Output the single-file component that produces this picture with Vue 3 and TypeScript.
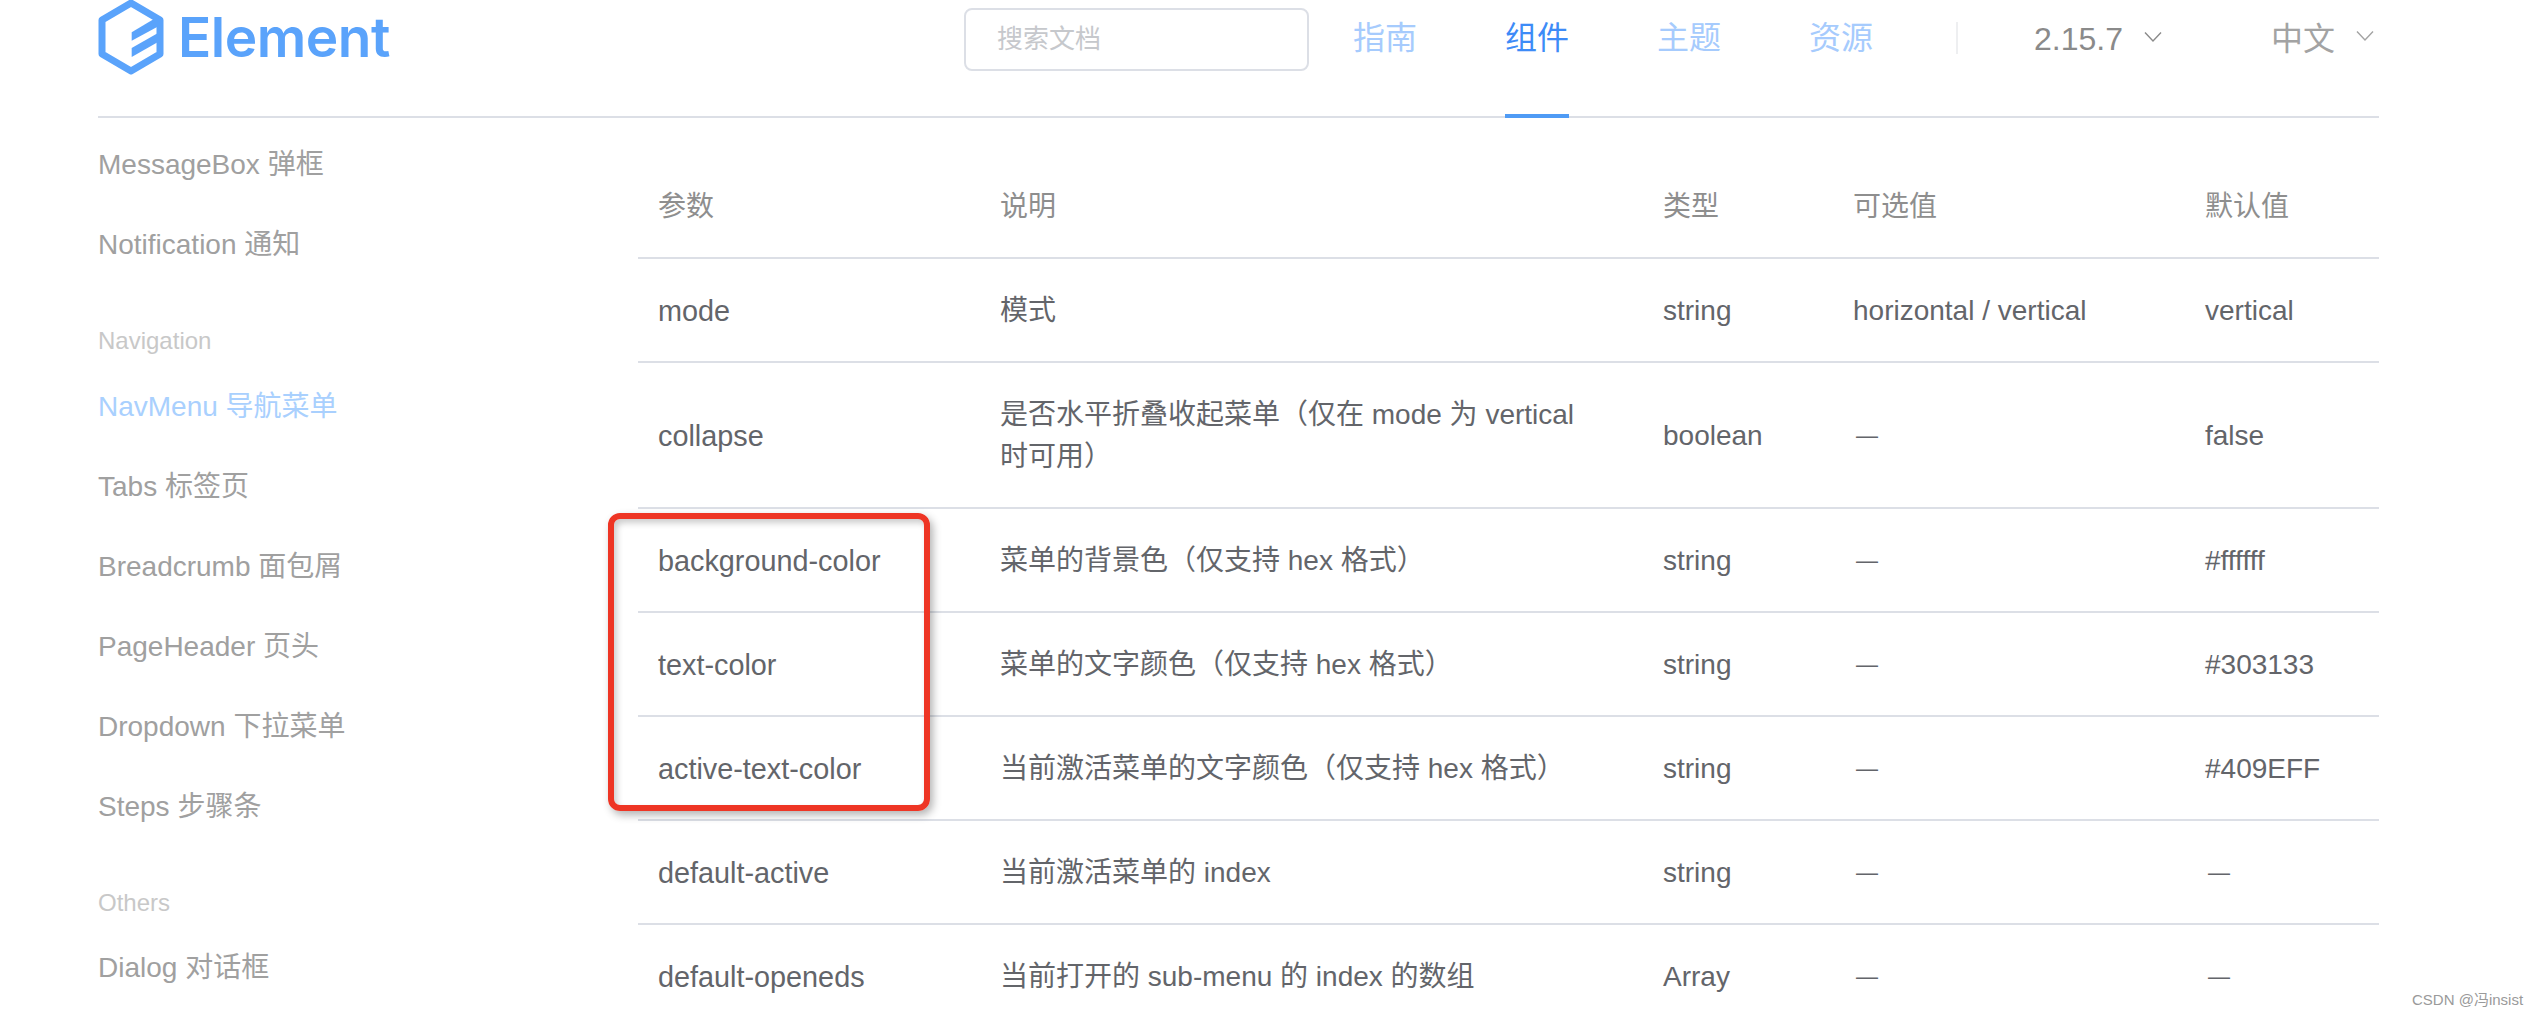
<script setup lang="ts">
interface Row { name: string; desc: string; type: string; options: string; def: string; }
interface Side { label: string; group?: boolean; active?: boolean; }

const links: { label: string; active?: boolean }[] = [
  { label: '指南' }, { label: '组件', active: true }, { label: '主题' }, { label: '资源' },
];
const side: Side[] = [
  { label: 'MessageBox 弹框' },
  { label: 'Notification 通知' },
  { label: 'Navigation', group: true },
  { label: 'NavMenu 导航菜单', active: true },
  { label: 'Tabs 标签页' },
  { label: 'Breadcrumb 面包屑' },
  { label: 'PageHeader 页头' },
  { label: 'Dropdown 下拉菜单' },
  { label: 'Steps 步骤条' },
  { label: 'Others', group: true },
  { label: 'Dialog 对话框' },
];
const heads = ['参数', '说明', '类型', '可选值', '默认值'];
const rows: Row[] = [
  { name: 'mode', desc: '模式', type: 'string', options: 'horizontal / vertical', def: 'vertical' },
  { name: 'collapse', desc: '是否水平折叠收起菜单（仅在 mode 为 vertical 时可用）', type: 'boolean', options: '—', def: 'false' },
  { name: 'background-color', desc: '菜单的背景色（仅支持 hex 格式）', type: 'string', options: '—', def: '#ffffff' },
  { name: 'text-color', desc: '菜单的文字颜色（仅支持 hex 格式）', type: 'string', options: '—', def: '#303133' },
  { name: 'active-text-color', desc: '当前激活菜单的文字颜色（仅支持 hex 格式）', type: 'string', options: '—', def: '#409EFF' },
  { name: 'default-active', desc: '当前激活菜单的 index', type: 'string', options: '—', def: '—' },
  { name: 'default-openeds', desc: '当前打开的 sub-menu 的 index 的数组', type: 'Array', options: '—', def: '—' },
];
</script>

<template>
  <div class="page">
    <header class="header">
      <div class="logo">
        <svg class="mark" viewBox="0 0 68 76" width="68" height="76" aria-hidden="true">
          <path d="M34 4 L63 21 V55 L34 72 L5 55 V21 Z" fill="none" stroke="#5aa3fb" stroke-width="7" stroke-linejoin="round" />
          <path d="M34.7 33.3 L56.5 20.3 L61 23 V27.6 L34.7 41.7 Z" fill="#5aa3fb" />
          <path d="M34.7 49 L61 34 V43 L34.7 58 Z" fill="#5aa3fb" />
        </svg>
        <span class="word">Element</span>
      </div>
      <div class="search">搜索文档</div>
      <nav class="links">
        <a v-for="l in links" :key="l.label" class="link" :class="{ on: l.active }">{{ l.label }}</a>
      </nav>
      <span class="divider"></span>
      <div class="drop ver">
        <span>2.15.7</span>
        <svg class="chev" viewBox="0 0 18 12" width="18" height="12"><path d="M1 1.5 L9 10 L17 1.5" fill="none" stroke="currentColor" stroke-width="1.4" /></svg>
      </div>
      <div class="drop lang">
        <span>中文</span>
        <svg class="chev" viewBox="0 0 18 12" width="18" height="12"><path d="M1 1.5 L9 10 L17 1.5" fill="none" stroke="currentColor" stroke-width="1.4" /></svg>
      </div>
    </header>

    <div class="body">
      <aside class="side">
        <div
          v-for="s in side"
          :key="s.label"
          :class="s.group ? 'group' : 'item'"
          :data-active="s.active ? 'y' : null"
        >{{ s.label }}</div>
      </aside>
      <main class="main">
        <table class="tbl">
          <colgroup>
            <col class="c1" /><col class="c2" /><col class="c3" /><col class="c4" /><col class="c5" />
          </colgroup>
          <thead>
            <tr><th v-for="h in heads" :key="h">{{ h }}</th></tr>
          </thead>
          <tbody>
            <tr v-for="r in rows" :key="r.name">
              <td class="name">{{ r.name }}</td>
              <td class="desc">{{ r.desc }}</td>
              <td>{{ r.type }}</td>
              <td :class="{ dash: r.options === '—' }">{{ r.options }}</td>
              <td :class="{ dash: r.def === '—' }">{{ r.def }}</td>
            </tr>
          </tbody>
        </table>
      </main>
    </div>

    <div class="redbox"></div>
    <div class="mark-text">CSDN @冯insist</div>
  </div>
</template>

<style scoped>
.page {
  position: relative;
  width: 2534px;
  height: 1016px;
  overflow: hidden;
  background: #fff;
  font-family: "Liberation Sans", "Noto Sans CJK SC", sans-serif;
  box-sizing: border-box;
  padding: 0 155px 0 98px;
}
.header {
  height: 118px;
  box-sizing: border-box;
  border-bottom: 2px solid #dcdfe6;
  display: flex;
  align-items: flex-start;
  white-space: nowrap;
}
.logo {
  display: flex;
  align-items: center;
  flex: none;
  width: 866px;
  height: 76px;
  margin-top: -1px;
}
.mark { margin-left: -1px; flex: none; }
.word {
  margin-left: 13px;
  font-family: Inter, "Liberation Sans", sans-serif;
  font-weight: 600;
  font-size: 55px;
  line-height: 76px;
  color: #5aa3fb;
  letter-spacing: -0.5px;
}
.search {
  flex: none;
  width: 345px;
  height: 63px;
  margin-top: 8px;
  box-sizing: border-box;
  border: 2px solid #dcdfe6;
  border-radius: 8px;
  padding-left: 31px;
  font-size: 26px;
  line-height: 58px;
  color: #c6c8cc;
}
.links {
  display: flex;
  flex: none;
  gap: 88px;
  margin-left: 44px;
  align-items: flex-start;
}
.link {
  display: block;
  height: 118px;
  font-size: 32px;
  line-height: 76px;
  color: #a6cbfd;
  box-sizing: border-box;
}
.link.on {
  color: #3d8bf7;
  border-bottom: 4px solid #4f9bf5;
}
.divider {
  flex: none;
  width: 2px;
  height: 32px;
  margin-top: 22px;
  margin-left: 83px;
  background: #eeeff1;
}
.drop {
  display: flex;
  flex: none;
  align-items: center;
  height: 78px;
  font-size: 32px;
}
.ver { margin-left: 76px; color: #8a8a8a; }
.lang { margin-left: 109px; color: #a3a3a3; height: 72px; }
.chev { margin-top: -4px; margin-left: 21px; }
.lang .chev { margin-top: 0; }

.body { display: flex; align-items: flex-start; }
.side {
  width: 540px;
  flex: none;
  padding-top: 7px;
}
.item {
  height: 80px;
  line-height: 80px;
  font-size: 28px;
  color: #a0a0a0;
  white-space: nowrap;
}
.item[data-active] { color: #a9d0fe; }
.group {
  height: 81.5px;
  padding-top: 36px;
  box-sizing: border-box;
  line-height: 40px;
  font-size: 24px;
  color: #c8c8c8;
}
.main { flex: 1; min-width: 0; }
.tbl {
  width: 1741px;
  margin-top: 37px;
  table-layout: fixed;
  border-collapse: separate;
  border-spacing: 0;
  font-size: 28px;
  color: #63656a;
}
.c1 { width: 342px; }
.c2 { width: 663px; }
.c3 { width: 190px; }
.c4 { width: 352px; }
.c5 { width: 194px; }
th, td {
  text-align: left;
  padding: 2px 20px 0;
  height: 100px;
  box-sizing: content-box;
  border-bottom: 2px solid #dcdfe6;
  line-height: 42px;
  vertical-align: middle;
  font-weight: 400;
}
th { color: #8e8e8e; }
tbody tr:nth-child(2) td { height: 142px; }
td.name { font-size: 28.8px; }
td.desc { padding-right: 60px; }
td.dash { font-size: 22px; padding-left: 23px; }
.redbox {
  position: absolute;
  left: 608px;
  top: 513px;
  width: 322px;
  height: 298px;
  box-sizing: border-box;
  border: 6px solid #ee3524;
  border-radius: 12px;
  box-shadow: 3px 4px 8px rgba(0, 0, 0, 0.3), inset 3px 4px 6px rgba(0, 0, 0, 0.2);
}
.mark-text {
  position: absolute;
  left: 2412px;
  top: 990px;
  font-size: 15px;
  line-height: 20px;
  color: #9a9a9a;
  white-space: nowrap;
}
</style>
